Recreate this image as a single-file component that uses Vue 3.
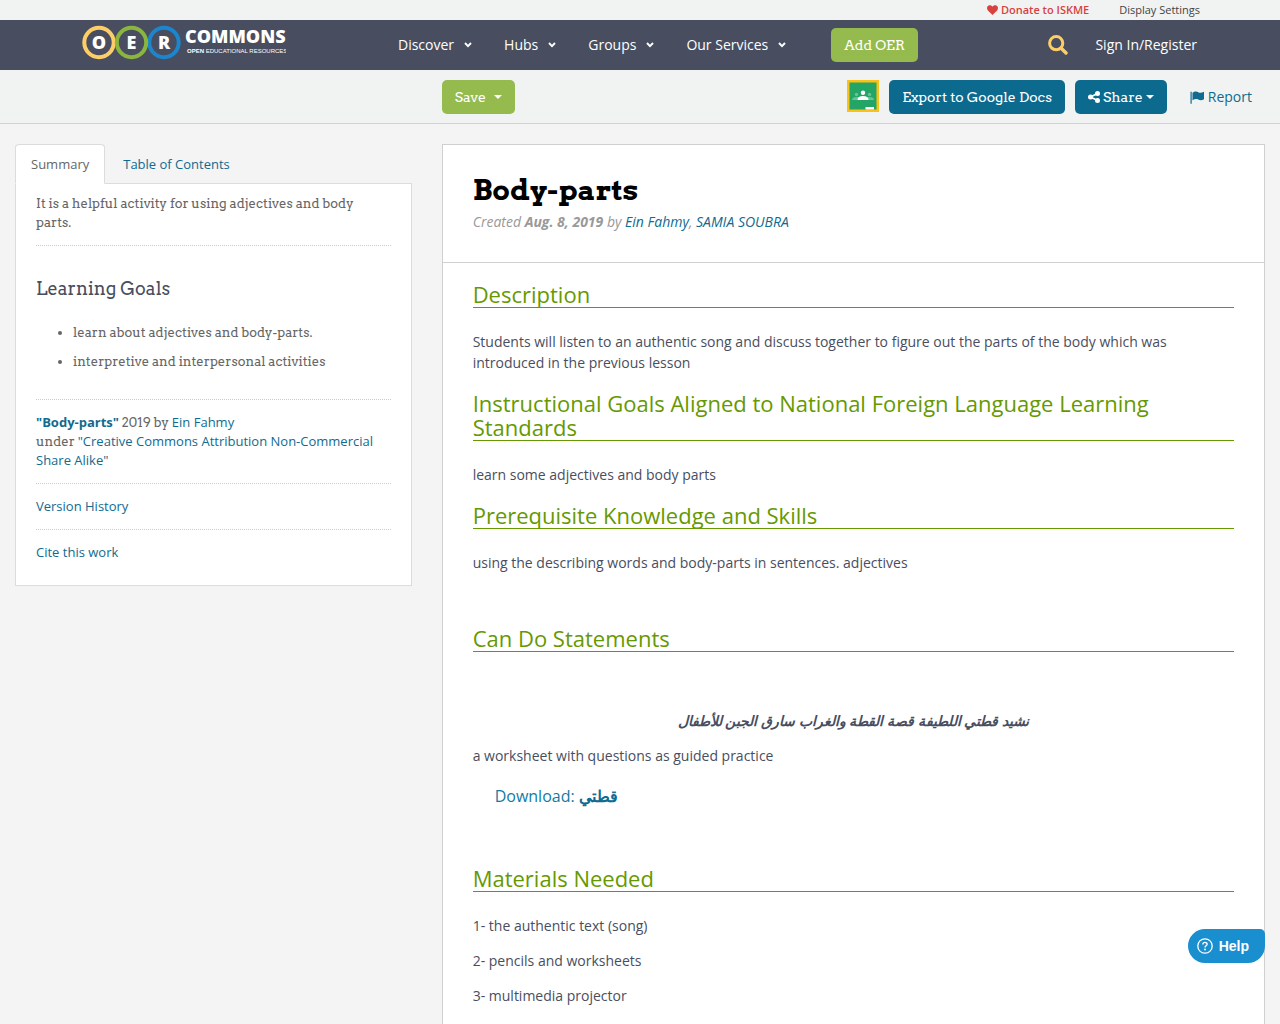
<script setup>
const menu = ['Discover', 'Hubs', 'Groups', 'Our Services']
const materials = ['1- the authentic text (song)', '2- pencils and worksheets', '3- multimedia projector']
</script>

<template>
  <div class="page">
    <div class="topbar">
      <a href="#" class="donate">
        <svg width="11" height="10" viewBox="0 0 11 10" aria-hidden="true"><path d="M5.500 10 L.9 5.400 C-.5 3.800-.2 1.300 1.700.5 C3.200-.1 4.700.5 5.500 1.700 C6.300.5 7.800-.1 9.300.5 C11.200 1.300 11.500 3.800 10.100 5.400Z" fill="#d9413f" /></svg>
        Donate to ISKME
      </a>
      <a href="#" class="display">Display Settings</a>
    </div>

    <header class="header">
      <a href="#" class="logo" aria-label="OER Commons">
        <svg width="204" height="36" viewBox="0 0 204 36">
          <g fill="none" stroke-width="4">
            <circle cx="17" cy="17.500" r="14.700" stroke="#fdce68" />
            <circle cx="82" cy="17.500" r="14.700" stroke="#1c85cb" />
            <circle cx="49.500" cy="17.500" r="14.700" stroke="#8ab63f" />
          </g>
          <g class="letters" text-anchor="middle">
            <text x="17" y="24">O</text>
            <text x="49.500" y="24">E</text>
            <text x="82" y="24">R</text>
          </g>
          <text class="commons" x="103" y="18">COMMONS</text>
          <text class="tagline" x="105" y="28"><tspan font-weight="700">OPEN</tspan> EDUCATIONAL RESOURCES</text>
        </svg>
      </a>
      <nav class="nav">
        <a v-for="item in menu" :key="item" href="#">
          {{ item }}
          <svg width="8" height="6" viewBox="0 0 8 6" aria-hidden="true"><path d="M1 1 L4 4.200 L7 1" fill="none" stroke="#fff" stroke-width="1.900" /></svg>
        </a>
      </nav>
      <button type="button" class="btn green add">Add OER</button>
      <div class="account">
        <button type="button" class="search" aria-label="Search">
          <svg width="20" height="20" viewBox="0 0 20 20"><circle cx="8.200" cy="8.200" r="6.600" fill="none" stroke="#fdce68" stroke-width="3" /><path d="M13 13 L18 18" stroke="#fdce68" stroke-width="3.400" stroke-linecap="round" /></svg>
        </button>
        <a href="#">Sign In/Register</a>
      </div>
    </header>

    <div class="toolbar">
      <div class="side"></div>
      <div class="main actions">
        <button type="button" class="btn green save">Save <span class="caret"></span></button>
        <div class="right">
          <a href="#" class="classroom" aria-label="Share to Google Classroom">
            <svg width="32" height="32" viewBox="0 0 32 32">
              <rect width="32" height="32" fill="#fbc116" />
              <rect x="2.500" y="2.500" width="27" height="27" fill="#23a566" />
              <g fill="#6cc298"><circle cx="9.500" cy="14.500" r="1.700" /><circle cx="22.500" cy="14.500" r="1.700" /><path d="M5 20 q0-3 5-3 h12 q5 0 5 3z" /></g>
              <g fill="#fff"><circle cx="16" cy="12.700" r="2.200" /><path d="M10.500 20 q0-4 5.500-4 t5.500 4z" /><path d="M18.500 27 h8.500 v2.500 h-8.500z" /></g>
            </svg>
          </a>
          <button type="button" class="btn blue">Export to Google Docs</button>
          <button type="button" class="btn blue share">
            <svg width="12" height="12" viewBox="0 0 12 12" aria-hidden="true"><g fill="#fff"><circle cx="2.500" cy="6" r="2.500" /><circle cx="9.500" cy="2.500" r="2.500" /><circle cx="9.500" cy="9.500" r="2.500" /></g><path d="M9.500 2.500 L2.500 6 L9.500 9.500" fill="none" stroke="#fff" stroke-width="1.700" /></svg>
            Share
            <span class="caret"></span>
          </button>
          <a href="#" class="report">
            <svg width="14" height="13" viewBox="0 0 14 13" aria-hidden="true"><path d="M.5.700 h1.200 v12 h-1.200z M2.500 1.800 C5-.2 7 .4 8.700 1.400 C10.500 2.200 12 1.500 14 .8 V8.300 C11.500 9.800 9.800 9.400 8.200 8.500 C6.500 7.700 4.500 8 2.500 9.200Z" fill="#0f6b8f" /></svg>
            Report
          </a>
        </div>
      </div>
    </div>

    <div class="columns">
      <aside class="side">
        <div class="tabs">
          <a href="#" class="tab active">Summary</a>
          <a href="#" class="tab">Table of Contents</a>
        </div>
        <div class="panel">
          <p class="block first">It is a helpful activity for using adjectives and body parts.</p>
          <section class="block goals">
            <h2>Learning Goals</h2>
            <ul>
              <li>learn about adjectives and body-parts.</li>
              <li>interpretive and interpersonal activities</li>
            </ul>
          </section>
          <p class="block">
            <a href="#"><b>"Body-parts"</b></a> 2019 by <a href="#">Ein Fahmy</a><br>
            under <a href="#">"Creative Commons Attribution Non-Commercial Share Alike"</a>
          </p>
          <p class="block"><a href="#">Version History</a></p>
          <p class="block"><a href="#">Cite this work</a></p>
        </div>
      </aside>

      <main class="main">
        <article class="article">
          <div class="heading">
            <h1>Body-parts</h1>
            <p>Created <b>Aug. 8, 2019</b> by <a href="#">Ein Fahmy</a>, <a href="#">SAMIA SOUBRA</a></p>
          </div>
          <div class="content">
            <h2>Description</h2>
            <p>Students will listen to an authentic song and discuss together to figure out the parts of the body which was introduced in the previous lesson</p>
            <h2>Instructional Goals Aligned to National Foreign Language Learning Standards</h2>
            <p>learn some adjectives and body parts</p>
            <h2>Prerequisite Knowledge and Skills</h2>
            <p>using the describing words and body-parts in sentences. adjectives</p>
            <p>&nbsp;</p>
            <h2>Can Do Statements</h2>
            <p>&nbsp;</p>
            <p class="song" lang="ar" dir="rtl">نشيد قطتي اللطيفة قصة القطة والغراب سارق الجبن للأطفال</p>
            <p>a worksheet with questions as guided practice</p>
            <p class="download"><a href="#">Download: <b lang="ar">قطتي</b></a></p>
            <p>&nbsp;</p>
            <h2>Materials Needed</h2>
            <p v-for="line in materials" :key="line">{{ line }}</p>
          </div>
        </article>
      </main>
    </div>

    <button type="button" class="help">
      <svg width="16" height="16" viewBox="0 0 16 16" aria-hidden="true"><circle cx="8" cy="8" r="7.200" fill="none" stroke="#fff" stroke-width="1.300" /><path d="M5.900 6.500 C5.900 3.700 10.100 3.800 10.100 6.300 C10.100 7.800 8 7.800 8 9.400" fill="none" stroke="#fff" stroke-width="1.400" /><circle cx="8" cy="11.500" r="1" fill="#fff" /></svg>
      Help
    </button>
  </div>
</template>

<style>
body {
  margin: 0;
  background: #f4f4f4;
}
</style>

<style scoped>
.page {
  font: 14px/20px "Open Sans", "Noto Sans", sans-serif;
  color: #484e60;
}
.page * {
  box-sizing: border-box;
}
a {
  color: #0f6b8f;
  text-decoration: none;
}
h1,
h2,
p,
ul {
  margin: 0;
  padding: 0;
}
button {
  border: 0;
  padding: 0;
  cursor: pointer;
}
.topbar {
  display: flex;
  justify-content: flex-end;
  gap: 30px;
  height: 20px;
  padding: 0 80px;
  background: #f0f3f2;
  font-size: 11px;
}
.donate {
  display: flex;
  align-items: center;
  gap: 3px;
  color: #d9413f;
  font-weight: 600;
}
.display {
  color: #444;
}
.header {
  display: flex;
  align-items: center;
  height: 50px;
  padding: 0 83px 0 82px;
  background: #484e60;
}
.header a {
  color: #fff;
}
.logo {
  height: 40px;
}
.letters {
  font: 800 18px "Open Sans", "Liberation Sans", sans-serif;
  fill: #fff;
}
.commons {
  font: 800 18px "Open Sans", "Liberation Sans", sans-serif;
  fill: #fff;
}
.tagline {
  font: 6px "Liberation Sans", sans-serif;
  fill: #fff;
}
.nav {
  display: flex;
  gap: 32px;
  margin-left: 112px;
}
.nav a {
  display: flex;
  align-items: center;
  gap: 10px;
}
.btn {
  height: 34px;
  padding: 0 13px;
  border-radius: 5px;
  color: #fff;
  font: 14px/20px "Arvo", "DejaVu Serif", serif;
  white-space: nowrap;
}
.green {
  background: #95ba4d;
}
.blue {
  background: #0d6a8f;
}
.add {
  margin-left: 45px;
}
.account {
  display: flex;
  align-items: center;
  gap: 27px;
  margin-left: auto;
}
.search {
  height: 20px;
  background: none;
}
.toolbar {
  display: flex;
  height: 54px;
  background: #f0f3f2;
  border-bottom: 1px solid #d2d4d4;
}
.side {
  flex: 0 0 33.3333%;
  min-width: 0;
  padding: 0 15px;
}
.main {
  flex: 1;
  min-width: 0;
  padding: 0 15px;
}
.actions {
  display: flex;
  align-items: flex-start;
  justify-content: space-between;
  padding-top: 10px;
}
.save {
  display: flex;
  align-items: center;
  gap: 8px;
}
.caret {
  border: 4px solid transparent;
  border-top-color: #fff;
  border-bottom: 0;
}
.right {
  display: flex;
  gap: 10px;
  padding-right: 13px;
}
.classroom {
  height: 32px;
}
.share {
  display: flex;
  align-items: center;
  gap: 3px;
}
.report {
  display: flex;
  align-items: center;
  gap: 4px;
  height: 34px;
  margin-left: 13px;
}
.columns {
  display: flex;
  align-items: flex-start;
  padding-top: 20px;
}
.tabs {
  display: flex;
  gap: 2px;
  font-size: 13px;
}
.tab {
  height: 39px;
  padding: 10px 15px;
  border: 1px solid transparent;
  line-height: 19px;
}
.active {
  position: relative;
  height: 40px;
  margin-bottom: -1px;
  background: #fff;
  border-color: #dcdcdc;
  border-bottom-color: #fff;
  border-radius: 4px 4px 0 0;
  color: #666;
}
.panel {
  padding: 10px 20px;
  background: #fff;
  border: 1px solid #dcdcdc;
  color: #666;
  font: 13px/19px "Arvo", "DejaVu Serif", serif;
}
.panel a {
  font-family: "Open Sans", "Noto Sans", sans-serif;
}
.block {
  padding: 13px 0;
  border-top: 1px dotted #ccc;
}
.first {
  padding-top: 0;
  border-top: 0;
}
.goals {
  padding: 31px 0 18px;
}
.goals h2 {
  margin-bottom: 22px;
  color: #484e60;
  font-weight: 400;
  font-size: 18px;
  line-height: 24px;
}
.goals ul {
  padding-left: 37px;
}
.goals li {
  margin-bottom: 10px;
}
.article {
  background: #fff;
  border: 1px solid #d0d0d0;
}
.heading {
  padding: 27px 30px 30px;
  border-bottom: 1px solid #d0d0d0;
}
.heading h1 {
  color: #000;
  font: 700 29px/36px "Arvo", "DejaVu Serif", serif;
}
.heading p {
  padding: 4px 0 0;
  color: #999;
  font-style: italic;
}
.content {
  padding: 1px 30px 30px;
}
.content h2 {
  margin: 18px 0 23px;
  padding-bottom: 1px;
  border-bottom: 1px solid #690;
  color: #690;
  font-weight: 400;
  font-size: 22px;
  line-height: 24px;
}
.content p {
  margin-bottom: 14px;
  line-height: 21px;
}
.song {
  text-align: center;
  font-weight: 700;
  font-style: italic;
}
.content .download {
  padding: 5px 22px 6px;
  font-size: 16px;
  line-height: 22px;
}
.download a {
  color: #127ba3;
}
.download b {
  color: #0f6b8f;
}
.help {
  position: fixed;
  right: 15px;
  bottom: 61px;
  display: flex;
  align-items: center;
  gap: 6px;
  height: 34px;
  padding: 0 16px 0 9px;
  border-radius: 17px 5px 17px 17px;
  background: #198fd0;
  color: #fff;
  font: 700 14px "Liberation Sans", sans-serif;
}
</style>
